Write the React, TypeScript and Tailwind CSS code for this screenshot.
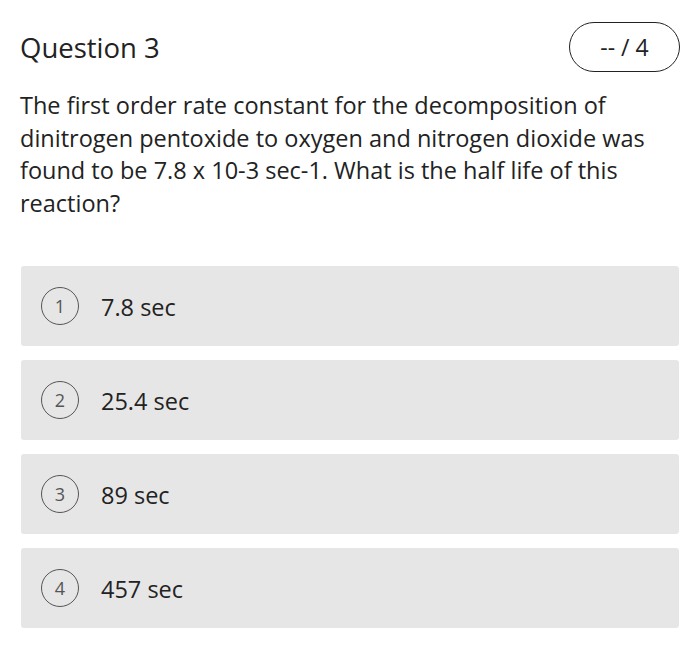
const options = ["7.8 sec", "25.4 sec", "89 sec", "457 sec"];

export default function App() {
  return (
    <div className="w-[700px] h-[647px] bg-white text-[#222] font-['Open_Sans',sans-serif]">
      <div className="flex items-start justify-between pl-5 pr-5 pt-[22px]">
        <h1 className="text-[27.5px] leading-[52px] font-normal">Question 3</h1>
        <div className="w-[111px] h-[50px] rounded-full border-[1.5px] border-[#222] flex items-center justify-center text-[23px]">
          -- / 4
        </div>
      </div>
      <p className="pl-5 pr-5 mt-[15px] text-[23.5px] leading-[32.5px]">
        The first order rate constant for the decomposition of dinitrogen pentoxide to oxygen and nitrogen dioxide was
        found to be 7.8 x 10-3 sec-1. What is the half life of this reaction?
      </p>
      <div className="flex flex-col gap-[14px] pl-[21px] pr-[21px] mt-[47px]">
        {options.map((opt, i) => (
          <div key={i} className="h-[80px] bg-[#e6e6e6] rounded-[3px] flex items-center">
            <div className="ml-[20px] w-[38px] h-[38px] rounded-full border-[1.5px] border-[#555] flex items-center justify-center text-[18px] text-[#555]">
              {i + 1}
            </div>
            <span className="ml-[22px] text-[23.5px] text-[#222] pt-[3px]">{opt}</span>
          </div>
        ))}
      </div>
    </div>
  );
}
